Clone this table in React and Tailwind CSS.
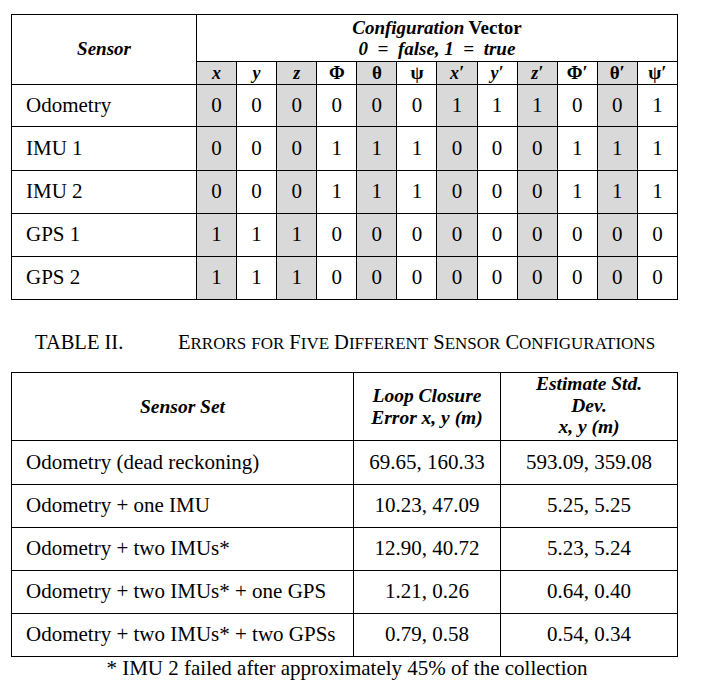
import React from "react";

const serif = "[font-family:'Liberation_Serif','Times_New_Roman',serif]";

const headers = [
  { t: "x", it: true },
  { t: "y", it: true },
  { t: "z", it: true },
  { t: "Φ", it: false },
  { t: "θ", it: false },
  { t: "ψ", it: false },
  { t: "x′", it: true },
  { t: "y′", it: true },
  { t: "z′", it: true },
  { t: "Φ′", it: false },
  { t: "θ′", it: false },
  { t: "ψ′", it: false },
];

const rows1 = [
  ["Odometry", [0, 0, 0, 0, 0, 0, 1, 1, 1, 0, 0, 1], "h-[42px]"],
  ["IMU 1", [0, 0, 0, 1, 1, 1, 0, 0, 0, 1, 1, 1], "h-[44px]"],
  ["IMU 2", [0, 0, 0, 1, 1, 1, 0, 0, 0, 1, 1, 1], "h-[43px]"],
  ["GPS 1", [1, 1, 1, 0, 0, 0, 0, 0, 0, 0, 0, 0], "h-[43px]"],
  ["GPS 2", [1, 1, 1, 0, 0, 0, 0, 0, 0, 0, 0, 0], "h-[43px]"],
];

const rows2 = [
  ["Odometry (dead reckoning)", "69.65, 160.33", "593.09, 359.08", "h-[44px]"],
  ["Odometry + one IMU", "10.23, 47.09", "5.25, 5.25", "h-[43px]"],
  ["Odometry + two IMUs*", "12.90, 40.72", "5.23, 5.24", "h-[43px]"],
  ["Odometry + two IMUs* + one GPS", "1.21, 0.26", "0.64, 0.40", "h-[43px]"],
  ["Odometry + two IMUs* + two GPSs", "0.79, 0.58", "0.54, 0.34", "h-[43px]"],
];

const captionWords = [
  ["E", "RRORS"],
  ["", "FOR"],
  ["F", "IVE"],
  ["D", "IFFERENT"],
  ["S", "ENSOR"],
  ["C", "ONFIGURATIONS"],
];

export default function App() {
  return (
    <div className={`${serif} bg-white text-black w-[726px] h-[688px] pt-[14px] pl-[11px] overflow-hidden`}>
      <table className="table-fixed border-collapse w-[667px]">
        <colgroup>
          <col className="w-[185px]" />
          {headers.map((_, i) => (
            <col key={i} />
          ))}
        </colgroup>
        <thead>
          <tr className="h-[47px]">
            <th rowSpan={2} className="border border-black text-[19px] font-bold italic align-middle">
              Sensor
            </th>
            <th colSpan={12} className="border border-black text-[19px] font-bold leading-[21px] align-middle">
              <div>
                <span className="italic">Configuration</span> Vector
              </div>
              <div className="italic">0&nbsp; =&nbsp; false, 1&nbsp; =&nbsp; true</div>
            </th>
          </tr>
          <tr className="h-[23px]">
            {headers.map((h, i) => (
              <th
                key={i}
                className={`border border-black leading-[20px] font-bold ${
                  h.it ? "italic text-[18px]" : "text-[19px]"
                } ${i % 2 === 0 ? "bg-[#d9d9d9]" : ""}`}
              >
                {h.t}
              </th>
            ))}
          </tr>
        </thead>
        <tbody>
          {rows1.map(([name, vals, h]) => (
            <tr key={name} className={h}>
              <td className="border border-black text-[21px] pl-[14px] align-middle">{name}</td>
              {vals.map((v, i) => (
                <td
                  key={i}
                  className={`border border-black text-[21px] text-center align-middle ${
                    i % 2 === 0 ? "bg-[#d9d9d9]" : ""
                  }`}
                >
                  {v}
                </td>
              ))}
            </tr>
          ))}
        </tbody>
      </table>

      <div className="flex items-baseline mt-[30px] leading-[24px]">
        <span className="pl-[24px] w-[167px] text-[20.5px]">TABLE II.</span>
        <span className="flex items-baseline gap-[5px]">
          {captionWords.map(([cap, rest], i) => (
            <span key={i}>
              <span className="text-[20.5px]">{cap}</span>
              <span className="text-[17px]">{rest}</span>
            </span>
          ))}
        </span>
      </div>

      <table className="table-fixed border-collapse w-[666px] mt-[16px]">
        <colgroup>
          <col className="w-[342px]" />
          <col className="w-[147px]" />
          <col className="w-[177px]" />
        </colgroup>
        <thead>
          <tr className="h-[68px]">
            <th className="border border-black text-[19.5px] font-bold italic align-middle">Sensor Set</th>
            <th className="border border-black text-[19.5px] font-bold italic leading-[22px] align-middle">
              Loop Closure
              <br />
              Error x, y (m)
            </th>
            <th className="border border-black text-[19.5px] font-bold italic leading-[21.5px] align-middle pb-[2px]">
              Estimate Std.
              <br />
              Dev.
              <br />
              x, y (m)
            </th>
          </tr>
        </thead>
        <tbody>
          {rows2.map(([a, b, c, h]) => (
            <tr key={a} className={h}>
              <td className="border border-black text-[21px] pl-[14px] align-middle">{a}</td>
              <td className="border border-black text-[21px] text-center align-middle">{b}</td>
              <td className="border border-black text-[21px] text-center align-middle">{c}</td>
            </tr>
          ))}
        </tbody>
      </table>
      <div className="w-[666px] text-center text-[21px] leading-[22px] pl-[6px]">
        * IMU 2 failed after approximately 45% of the collection
      </div>
    </div>
  );
}
